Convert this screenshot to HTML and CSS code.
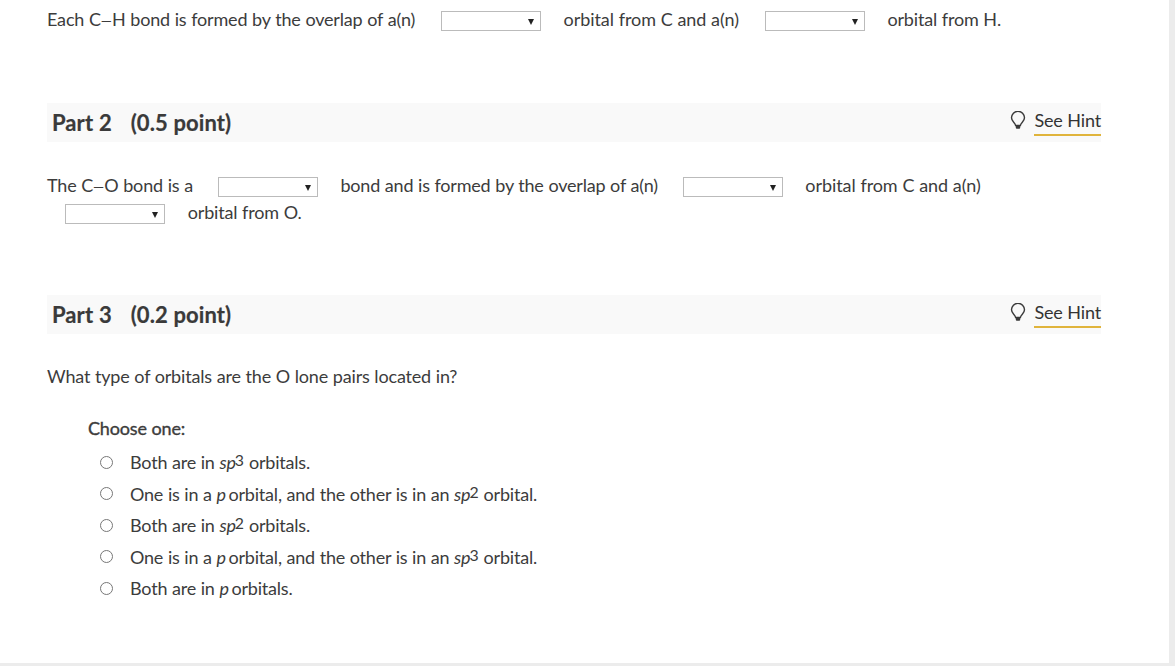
FILE: index.html
```html
<!DOCTYPE html>
<html lang="en">
<head>
<meta charset="utf-8">
<title>Orbitals</title>
<link rel="stylesheet" href="styles.css">
</head>
<body>
<main class="card">
  <p class="para first">Each C<span class="dash">—</span>H bond is formed by the overlap of a(n) <span class="sel"></span> <span class="wide">orbital from C and a(n)</span> <span class="sel"></span> orbital from H.</p>

  <header class="part part2">
    <h2 class="title">Part 2<span class="pts">(0.5 point)</span></h2>
    <a class="hint"><svg class="bulb" viewBox="0 0 16 20" width="16" height="20"><path d="M5.600 14.500C5.200 11.500 1.500 10.500 1.500 6.800a6.500 6.500 0 0 1 13 0c0 3.700-3.700 4.700-4.100 7.700z" fill="none" stroke="#3a3a3a" stroke-width="1.400"/><path d="M5.800 15h4.400v1.800a1 1 0 0 1-1 1H6.800a1 1 0 0 1-1-1z" fill="#3a3a3a"/></svg><span class="hint-text">See Hint</span></a>
  </header>
  <p class="para">The C<span class="dash">—</span>O bond is a <span class="sel"></span> <span class="narrow">bond and is formed by the overlap of a(n)</span> <span class="sel"></span> <span class="wide">orbital from C and a(n)</span> <span class="sel wrapped"></span> orbital from O.</p>

  <header class="part part3">
    <h2 class="title">Part 3<span class="pts">(0.2 point)</span></h2>
    <a class="hint"><svg class="bulb" viewBox="0 0 16 20" width="16" height="20"><path d="M5.600 14.500C5.200 11.500 1.500 10.500 1.500 6.800a6.500 6.500 0 0 1 13 0c0 3.700-3.700 4.700-4.100 7.700z" fill="none" stroke="#3a3a3a" stroke-width="1.400"/><path d="M5.800 15h4.400v1.800a1 1 0 0 1-1 1H6.800a1 1 0 0 1-1-1z" fill="#3a3a3a"/></svg><span class="hint-text">See Hint</span></a>
  </header>
  <p class="para q">What type of orbitals are the O lone pairs located in?</p>

  <section class="choices">
    <div class="choose">Choose one:</div>
    <ul class="opts">
      <li class="opt"><span class="radio"></span><span>Both are in <i>sp</i><sup>3</sup> orbitals.</span></li>
      <li class="opt"><span class="radio"></span><span>One is in a <i class="tight">p</i> orbital, and the other is in an <i>sp</i><sup>2</sup> orbital.</span></li>
      <li class="opt"><span class="radio"></span><span>Both are in <i>sp</i><sup>2</sup> orbitals.</span></li>
      <li class="opt"><span class="radio"></span><span>One is in a <i class="tight">p</i> orbital, and the other is in an <i>sp</i><sup>3</sup> orbital.</span></li>
      <li class="opt"><span class="radio"></span><span>Both are in <i class="tight">p</i> orbitals.</span></li>
    </ul>
  </section>
</main>
</body>
</html>
```

FILE: styles.css
```css
html, body { margin: 0; height: 100%; }
body {
  background: #ececec;
  font-family: Lato, "Open Sans", sans-serif;
  font-size: 18px;
  letter-spacing: -0.17px;
  word-spacing: 0.3px;
  color: #3c3c3c;
  overflow: hidden;
}
.card {
  box-sizing: border-box;
  width: 1169px;
  height: 663px;
  background: #fff;
  padding: 6px 68px 0 47px;
}
.para {
  margin: 0;
  line-height: 27px;
}
.first { margin-bottom: 70px; }
.q { margin-top: -1px; }
.dash { font-size: 14px; letter-spacing: 0; line-height: 0; }
.wide { letter-spacing: -0.08px; }
.narrow { letter-spacing: -0.19px; }
.sel {
  display: inline-block;
  box-sizing: border-box;
  position: relative;
  width: 100px;
  height: 20px;
  margin: 0 18px 0 20px;
  border: 1px solid #bbb;
  background: #fff;
  vertical-align: -5px;
}
.first .sel { margin-left: 21px; }
.sel.wrapped { margin-left: 18px; }
.sel::after {
  content: "";
  position: absolute;
  right: 6px;
  top: 7px;
  border-left: 3.500px solid transparent;
  border-right: 3.500px solid transparent;
  border-top: 6px solid #222;
}
.part {
  display: flex;
  align-items: center;
  justify-content: space-between;
  height: 39px;
  background: #f9f9f9;
  padding-left: 5px;
  margin-bottom: 30px;
}
.part3 { margin-top: 69px; }
.title {
  margin: 0;
  font-size: 22px;
  font-weight: 700;
  letter-spacing: 0.08px;
  color: #3a3a3a;
  -webkit-text-stroke: 0.2px #3a3a3a;
}
.pts { margin-left: 19px; }
.hint {
  display: flex;
  align-items: center;
  gap: 8px;
  color: #333;
  font-size: 18px;
  margin-top: -5px;
}
.hint-text {
  border-bottom: 2px solid #e0b43c;
  line-height: 28px;
  margin-top: 2px;
}
.bulb { margin-top: 2px; }
.choices { margin: 25px 0 0 41px; }
.choose {
  font-size: 18px;
  line-height: 27px;
  margin-bottom: 4.500px;
  -webkit-text-stroke: 0.35px #3c3c3c;
}
.opts { margin: 0; padding: 0; list-style: none; }
.opt {
  display: flex;
  align-items: center;
  height: 31.500px;
  padding-left: 12px;
  gap: 17px;
  letter-spacing: -0.2px;
}
.radio {
  box-sizing: border-box;
  width: 13px;
  height: 13px;
  border: 1.500px solid #777;
  border-radius: 50%;
  background: #fff;
}
.tight { margin-right: -2px; }
sup {
  font-size: 88%;
  line-height: 0;
  vertical-align: 3px;
  margin-left: -1px;
  margin-right: 0.5px;
}
```
